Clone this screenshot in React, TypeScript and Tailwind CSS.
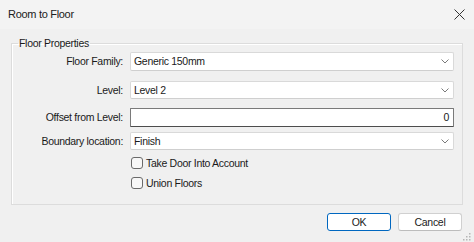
import React from "react"

const font = "font-['Segoe_UI','Liberation_Sans',sans-serif]"

function Chevron() {
  return (
    <svg width="8" height="5" viewBox="0 0 8 5" className="shrink-0">
      <path d="M0.5 0.5 L4 4 L7.5 0.5" fill="none" stroke="#6b6b6b" strokeWidth="0.9" />
    </svg>
  )
}

function Row({ label, children, className = "" }: { label: string; children: React.ReactNode; className?: string }) {
  return (
    <div className={`flex items-center ${className}`}>
      <div className="w-[112px] text-right pr-[1px] leading-none">{label}</div>
      <div className="ml-[6px] flex-1">{children}</div>
    </div>
  )
}

function Combo({ value, h = "h-[19px]" }: { value: string; h?: string }) {
  return (
    <div className={`${h} bg-white border border-[#d9d9d9] border-b-[#cfcfcf] rounded-[2px] flex items-center pl-[3px] pr-[4px]`}>
      <span className="flex-1 leading-none">{value}</span>
      <Chevron />
    </div>
  )
}

function Check({ label, className = "" }: { label: string; className?: string }) {
  return (
    <div className={`flex items-center ml-[119px] ${className}`}>
      <div className="w-[12px] h-[12px] rounded-[3px] border border-[#6a6a6a] bg-[#f7f7f7]" />
      <span className="ml-[3px] leading-none">{label}</span>
    </div>
  )
}

export default function App() {
  return (
    <div className={`w-[474px] h-[242px] bg-[#f0f0f0] flex flex-col ${font} text-[10.5px] tracking-[-0.3px] text-[#1a1a1a] overflow-hidden`}>
      {/* title bar */}
      <div className="h-[29px] shrink-0 flex items-center bg-[#f3f3f3] pl-[8px] pr-[9px]">
        <span className="flex-1 text-[11px] leading-none text-[#202020]">Room to Floor</span>
        <svg width="11" height="11" viewBox="0 0 11 11">
          <path d="M0.5 0.5 L10.5 10.5 M10.5 0.5 L0.5 10.5" stroke="#333" strokeWidth="1" />
        </svg>
      </div>

      {/* group box */}
      <fieldset className="mx-[11px] mt-[8px] h-[170px] border border-[#dcdcdc] shadow-[inset_1px_1px_0_#fff] px-0 pb-0 pt-[1px] pr-[8px] min-w-0">
        <legend className="ml-[6px] px-[1px] leading-[13px]">Floor Properties</legend>
        <Row label="Floor Family:" className="mt-[1px]">
          <Combo value="Generic 150mm" />
        </Row>
        <Row label="Level:" className="mt-[10px]">
          <Combo value="Level 2" h="h-[18px]" />
        </Row>
        <Row label="Offset from Level:" className="mt-[9px]">
          <div className="h-[19px] bg-white border border-[#7a7a7a] border-b-[#4d4d4d] rounded-[1px] flex items-center justify-end pr-[4px]">
            <span className="leading-none">0</span>
          </div>
        </Row>
        <Row label="Boundary location:" className="mt-[5px]">
          <Combo value="Finish" h="h-[18px]" />
        </Row>
        <Check label="Take Door Into Account" className="mt-[7px]" />
        <Check label="Union Floors" className="mt-[8px]" />
      </fieldset>

      {/* buttons */}
      <div className="flex justify-end gap-[7px] mt-[8px] pr-[12px]">
        <button className="w-[64px] h-[18px] bg-white border border-[#0067c0] rounded-[3px] leading-none text-[#1a1a1a]">
          OK
        </button>
        <button className="w-[64px] h-[18px] bg-white border border-[#d0d0d0] border-b-[#bcbcbc] rounded-[3px] leading-none text-[#1a1a1a]">
          Cancel
        </button>
      </div>
      <div className="flex justify-end pr-[2px] mt-[1px]">
        <svg width="10" height="10" viewBox="0 0 10 10">
          <g fill="#b5b5b5">
            <rect x="7" y="1" width="1.5" height="1.5" />
            <rect x="4" y="4" width="1.5" height="1.5" />
            <rect x="7" y="4" width="1.5" height="1.5" />
            <rect x="1" y="7" width="1.5" height="1.5" />
            <rect x="4" y="7" width="1.5" height="1.5" />
            <rect x="7" y="7" width="1.5" height="1.5" />
          </g>
        </svg>
      </div>
    </div>
  )
}
